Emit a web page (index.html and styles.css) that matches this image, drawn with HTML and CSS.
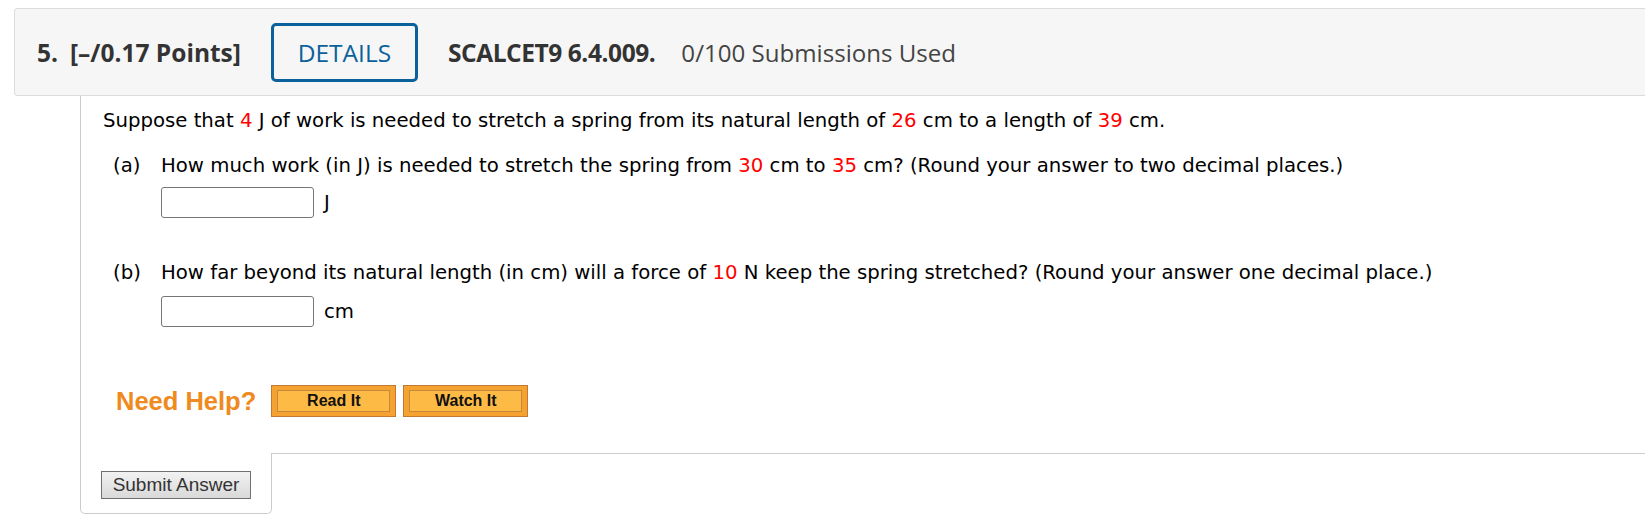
FILE: index.html
```html
<!DOCTYPE html>
<html>
<head>
<meta charset="utf-8">
<link rel="stylesheet" href="styles.css">
</head>
<body>
<div class="question">
  <div class="qhead">
    <span class="qnum">5.</span>
    <span class="qpoints">[–/0.17 Points]</span>
    <span class="details">DETAILS</span>
    <span class="qcode">SCALCET9 6.4.009.</span>
    <span class="qsubs">0/100 Submissions Used</span>
  </div>
  <div class="qbody">
    <p class="intro">Suppose that <span class="num">4</span> J of work is needed to stretch a spring from its natural length of <span class="num">26</span> cm to a length of <span class="num">39</span> cm.</p>
    <div class="part part-a">
      <span class="plabel">(a)</span>
      <div class="pcontent">
        <p class="ptext">How much work (in J) is needed to stretch the spring from <span class="num">30</span> cm to <span class="num">35</span> cm? (Round your answer to two decimal places.)</p>
        <div class="answer"><input class="ans-input" type="text"><span class="unit">J</span></div>
      </div>
    </div>
    <div class="part part-b">
      <span class="plabel">(b)</span>
      <div class="pcontent">
        <p class="ptext">How far beyond its natural length (in cm) will a force of <span class="num">10</span> N keep the spring stretched? (Round your answer one decimal place.)</p>
        <div class="answer"><input class="ans-input" type="text"><span class="unit">cm</span></div>
      </div>
    </div>
    <div class="help">
      <span class="need-help">Need Help?</span>
      <span class="help-btn"><span class="help-inner">Read It</span></span>
      <span class="help-btn"><span class="help-inner">Watch It</span></span>
    </div>
  </div>
  <div class="qfoot">
    <div class="submit-cell"><button class="submit" type="button">Submit Answer</button></div>
    <div class="foot-fill"></div>
  </div>
</div>
</body>
</html>
```
FILE: styles.css
```css
html, body {
  margin: 0;
  padding: 0;
  background: #ffffff;
  overflow: hidden;
}
body {
  width: 1645px;
  height: 529px;
}
.question {
  padding-top: 8px;
}
.qhead {
  margin-left: 14px;
  margin-right: -20px;
  height: 86px;
  border: 1px solid #dcdcdc;
  border-radius: 3px 0 0 3px;
  background: #f6f6f6;
  display: flex;
  align-items: center;
  padding-left: 22px;
  font-family: "Open Sans", "Liberation Sans", sans-serif;
  font-size: 24.5px;
  color: #333333;
}
.qnum {
  font-weight: 700;
  margin-right: 12px;
}
.qpoints {
  font-weight: 700;
}
.details {
  margin-left: 30px;
  width: 141px;
  height: 53px;
  border: 3px solid #0b619b;
  border-radius: 5px;
  color: #0b619b;
  display: flex;
  align-items: center;
  justify-content: center;
  box-sizing: content-box;
}
.qcode {
  font-weight: 700;
  margin-left: 30px;
  letter-spacing: -0.43px;
}
.qsubs {
  margin-left: 26px;
  font-size: 24.1px;
  color: #444444;
}
.qbody {
  margin-left: 80px;
  border-left: 1px solid #cccccc;
  padding: 13px 0 36px 22px;
  font-family: "DejaVu Sans", Verdana, sans-serif;
  font-size: 19.7px;
  color: #000000;
}
.qbody p {
  margin: 0;
  line-height: 24px;
}
.num {
  color: #ff0000;
}
.part {
  display: flex;
  padding-left: 10px;
}
.part-a {
  margin-top: 21px;
}
.part-b {
  margin-top: 43px;
}
.plabel {
  width: 48px;
  line-height: 24px;
}
.answer {
  display: flex;
  align-items: center;
  margin-top: 9px;
}
.part-b .answer {
  margin-top: 11px;
}
.ans-input {
  width: 153px;
  height: 31px;
  box-sizing: border-box;
  border: 1px solid #767676;
  border-radius: 3px;
  margin: 0;
  padding: 0;
  background: #ffffff;
}
.unit {
  margin-left: 10px;
}
.help {
  display: flex;
  align-items: center;
  margin-top: 58px;
  padding-left: 13px;
}
.need-help {
  font-family: "Liberation Sans", Arial, sans-serif;
  font-weight: 700;
  font-size: 25.5px;
  color: #ef8a1e;
  margin-right: 15px;
}
.help-btn {
  width: 125px;
  height: 32px;
  box-sizing: border-box;
  border: 1px solid #c07a33;
  background: #f6a231;
  padding: 4px 5px;
  margin-right: 7px;
  display: flex;
}
.help-inner {
  flex: 1;
  border: 1px solid #c48a3c;
  background: #fdbb45;
  display: flex;
  align-items: center;
  justify-content: center;
  font-family: "Liberation Sans", Arial, sans-serif;
  font-weight: 700;
  font-size: 16px;
  color: #111111;
}
.qfoot {
  display: flex;
  margin-left: 80px;
}
.submit-cell {
  width: 192px;
  height: 61px;
  border: 1px solid #cccccc;
  border-top: none;
  border-radius: 0 0 5px 5px;
  padding: 18px 0 0 20px;
  box-sizing: border-box;
}
.submit {
  width: 150px;
  height: 28px;
  border: 1px solid #707070;
  background: linear-gradient(#f2f2f2, #d9d9d9);
  font-family: "Liberation Sans", Arial, sans-serif;
  font-size: 19px;
  color: #333333;
  padding: 0;
  margin: 0;
  border-radius: 0;
}
.foot-fill {
  flex: 1;
  border-top: 1px solid #cccccc;
}
```
